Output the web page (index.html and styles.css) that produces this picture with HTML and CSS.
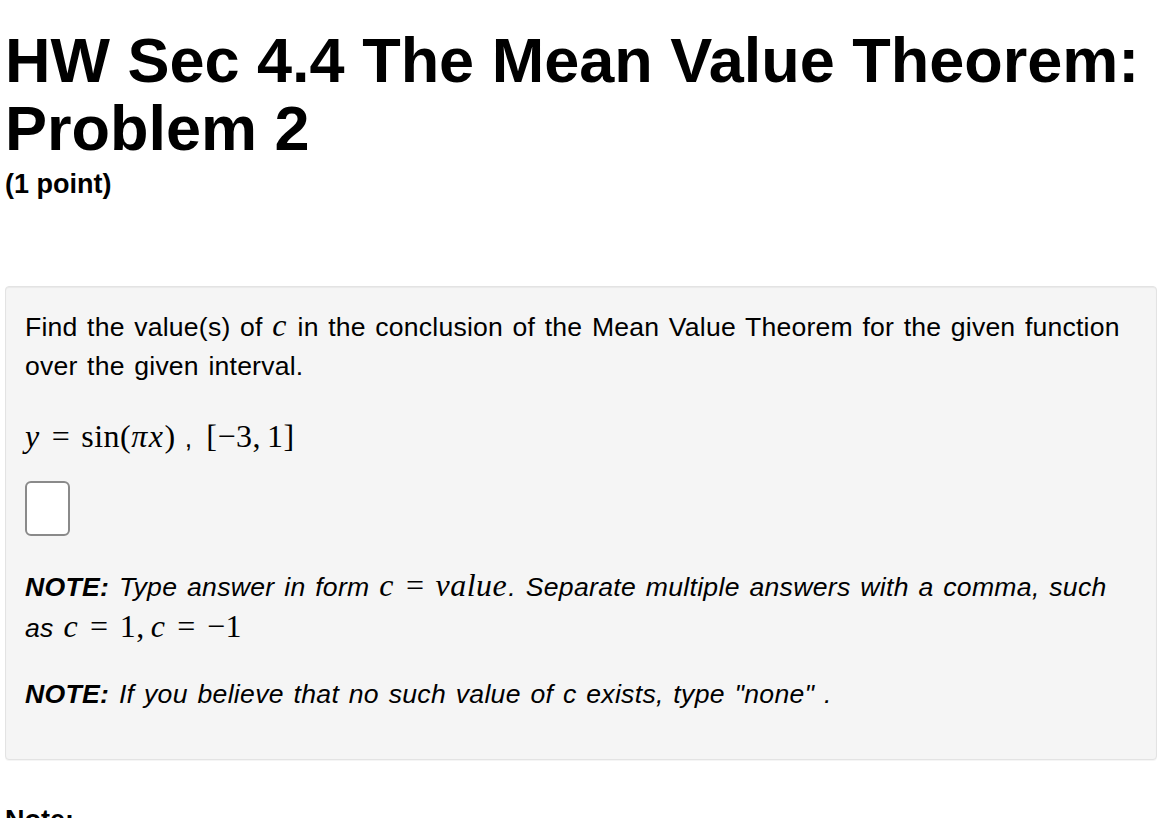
FILE: index.html
```html
<!DOCTYPE html>
<html lang="en">
<head>
<meta charset="utf-8">
<title>HW Sec 4.4 The Mean Value Theorem: Problem 2</title>
<link rel="stylesheet" href="styles.css">
</head>
<body>
<h1 class="title">HW Sec 4.4 The Mean Value Theorem: Problem 2</h1>
<div class="points">(1 point)</div>
<div class="well">
  <p class="para">Find the value(s) of <span class="math"><span class="mi">c</span></span> in the conclusion of the Mean Value Theorem for the given function over the given interval.</p>
  <p class="para mathline"><span class="math"><span class="mi">y</span><span class="mo">=</span><span class="mr">sin</span><span class="mr">(</span><span class="mi">π</span><span class="mi">x</span><span class="mr">)</span></span><span class="comma">,</span><span class="math"><span class="mr">[</span><span class="mr">−3,</span><span class="mr sp">1</span><span class="mr">]</span></span></p>
  <div class="answer"></div>
  <p class="para note"><b>NOTE:</b> Type answer in form <span class="math"><span class="mi">c</span><span class="mo">=</span><span class="mi">value</span></span>. Separate multiple answers with a comma, such as <span class="math"><span class="mi">c</span><span class="mo">=</span><span class="mr">1,</span><span class="mi sp">c</span><span class="mo">=</span><span class="mr">−1</span></span></p>
  <p class="para note last"><b>NOTE:</b> If you believe that no such value of c exists, type "none" .</p>
</div>
<h2 class="subhead">Note:</h2>
</body>
</html>
```

FILE: styles.css
```css
html, body {
  margin: 0;
  padding: 0;
  background: #ffffff;
}
body {
  padding: 0 9px 0 5px;
  font-family: "Liberation Sans", Arial, Helvetica, sans-serif;
  color: #000;
}
.title {
  margin: 26px 0 0;
  font-size: 63px;
  line-height: 68px;
  font-weight: bold;
}
.points {
  margin: 6px 0 0;
  font-size: 27px;
  line-height: 32px;
  font-weight: bold;
}
.well {
  margin-top: 86px;
  background: #f5f5f5;
  border: 1px solid #e3e3e3;
  border-radius: 4px;
  box-shadow: inset 0 1px 1px rgba(0,0,0,0.05), 0 1px 0 rgba(0,0,0,0.04);
  padding: 19px;
}
.para {
  margin: 0;
  font-size: 26.6px;
  line-height: 39px;
  word-spacing: 2px;
  letter-spacing: 0.2px;
}
.mathline {
  margin-top: 31px;
}
.answer {
  margin-top: 23px;
  width: 41px;
  height: 51px;
  background: #fff;
  border: 2px solid #8a8a8a;
  border-radius: 6px;
}
.note {
  margin-top: 30px;
  font-style: italic;
  letter-spacing: 0.3px;
}
.note.last {
  margin-top: 27px;
  margin-bottom: 26px;
}
.math {
  font-family: "Liberation Serif", "Times New Roman", serif;
  font-size: 32px;
  font-style: normal;
  word-spacing: 0;
  letter-spacing: 0.5px;
}
.mi {
  font-style: italic;
  padding-right: 1px;
}
.mr {
  font-style: normal;
}
.mo {
  font-style: normal;
  padding: 0 11px;
}
.sp {
  padding-left: 6px;
}
.comma {
  padding: 0 14px 0 9px;
}
.subhead {
  margin: 44px 0 0;
  font-size: 27px;
  line-height: 32px;
  font-weight: bold;
}
```
